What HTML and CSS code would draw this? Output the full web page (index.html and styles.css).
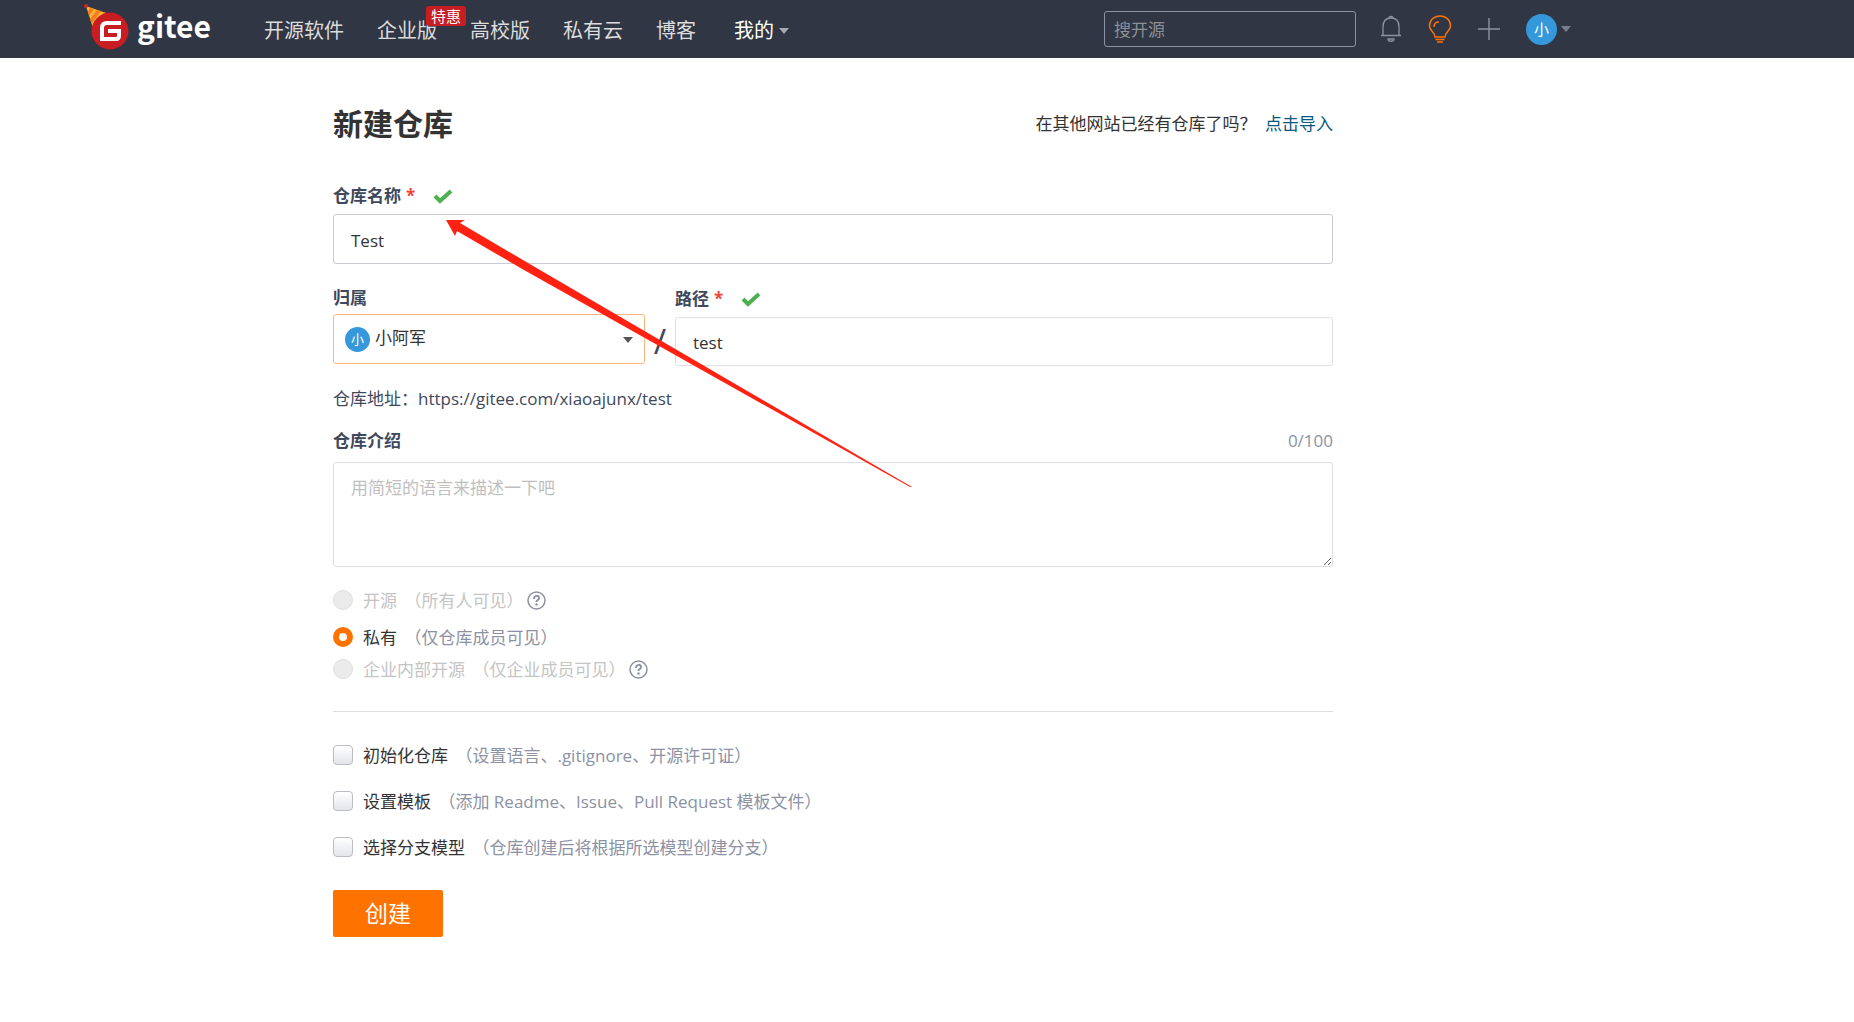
FILE: index.html
```html
<!DOCTYPE html>
<html lang="zh-CN">
    <head>
        <title>新建仓库 - Gitee</title>
        <meta charset="utf-8">
        <link rel="stylesheet" href="styles.css">
    </head>
    <body>
        <header class="header">
            <a class="logo" href="#">
                <svg class="logo-mark" width="46" height="46" viewBox="0 0 46 46">
                    <path d="M2 3 L25 11 L9 25 Z" fill="#fdb62f"/>
                    <path d="M6 5 L10 6 L5 13 L4 9 Z M13 7 L17 8 L8 20 L6 16 Z M20 9 L24 11 L12 23 L9 23 Z" fill="#f47b20"/>
                    <circle cx="2" cy="3" r="2" fill="#d8232a"/>
                    <circle cx="26" cy="28" r="18.5" fill="#c71d23"/>
                    <path d="M37 20 H23 Q18 20 18 25 V36 H32 Q35 36 35 33 V28 H24" fill="none" stroke="#fff" stroke-width="4"/>
                </svg>
                <span class="logo-text">gitee</span>
            </a>
            <nav class="nav">
                <a href="#">开源软件</a>
                <a href="#" class="nav-sale">企业版<span class="badge">特惠</span></a>
                <a href="#">高校版</a>
                <a href="#">私有云</a>
                <a href="#">博客</a>
                <a href="#" class="nav-mine">我的<span class="caret"></span></a>
            </nav>
            <div class="tools">
                <input class="search" type="text" placeholder="搜开源" aria-label="搜开源">
                <a class="tool" href="#" aria-label="通知">
                    <svg width="22" height="28" viewBox="0 0 22 28" fill="none" stroke="#8c92a4">
                        <path d="M3 20 V12 C3 6 6 3 11 3 C16 3 19 6 19 12 V20" stroke-width="1.3"/>
                        <path d="M1 20.5 H21" stroke-width="1.5"/>
                        <path d="M9 3 C9 1 13 1 13 3 M8 24 H14 C14 27 8 27 8 24 Z" stroke-width="1.3"/>
                    </svg>
                </a>
                <a class="tool" href="#" aria-label="提示">
                    <svg width="24" height="30" viewBox="0 0 24 30" fill="none" stroke="#fe7300" stroke-width="1.5">
                        <path d="M7 23 C7 18 1.5 17 1.5 12 C1.5 6 6 2 12 2 C18 2 22.5 6 22.5 12 C22.5 17 17 18 17 23 Z"/>
                        <path d="M6 13 C6 10 8 8 11 8 M7.5 25.5 H16.5 M9 28 H15"/>
                    </svg>
                </a>
                <a class="tool" href="#" aria-label="新建">
                    <svg width="22" height="22" viewBox="0 0 22 22" stroke="#8c92a4" stroke-width="1.4">
                        <path d="M11 0 V22 M0 11 H22"/>
                    </svg>
                </a>
                <a class="user" href="#"><span class="avatar avatar-big">小</span><span class="caret caret-dim"></span></a>
            </div>
        </header>

        <main class="container">
            <div class="title-row">
                <h1>新建仓库</h1>
                <p class="import">在其他网站已经有仓库了吗？ <a href="#">点击导入</a></p>
            </div>

            <form class="repo-form">
                <label class="label required" for="repo-name">仓库名称 <span class="star">*</span>
                    <svg class="check" width="20" height="16" viewBox="0 0 20 16"><path d="M2 8 L7 13 L18 3" fill="none" stroke="#4caf50" stroke-width="4"/></svg>
                </label>
                <input class="input input-name" id="repo-name" type="text" value="Test">

                <div class="path-row">
                    <div class="owner">
                        <label class="label" for="repo-owner">归属</label>
                        <div class="select-box">
                            <span class="avatar">小</span>
                            <select class="select" id="repo-owner">
                                <option>小阿军</option>
                            </select>
                            <span class="caret select-caret"></span>
                        </div>
                    </div>
                    <span class="slash">/</span>
                    <div class="path">
                        <label class="label required" for="repo-path">路径 <span class="star">*</span>
                            <svg class="check" width="20" height="16" viewBox="0 0 20 16"><path d="M2 8 L7 13 L18 3" fill="none" stroke="#4caf50" stroke-width="4"/></svg>
                        </label>
                        <input class="input input-path" id="repo-path" type="text" value="test">
                    </div>
                </div>

                <p class="address">仓库地址：https://gitee.com/xiaoajunx/test</p>

                <div class="intro-row">
                    <label class="label" for="repo-intro">仓库介绍</label>
                    <span class="count">0/100</span>
                </div>
                <textarea class="textarea" id="repo-intro" placeholder="用简短的语言来描述一下吧"></textarea>

                <div class="radios">
                    <div class="option option-open">
                        <input class="radio" type="radio" name="visible" id="v-open" disabled>
                        <label class="off" for="v-open">开源 <span>（所有人可见）</span></label>
                        <svg class="help" width="19" height="19" viewBox="0 0 19 19" fill="none" stroke="#8c92a4"><circle cx="9.5" cy="9.5" r="8.5" stroke-width="1.5"/><path d="M7 8 C7 4 12 4 12 7 C12 9 9.5 9 9.5 11" stroke-width="2"/><circle cx="9.5" cy="13.5" r="1.2" fill="#8c92a4" stroke="none"/></svg>
                    </div>
                    <div class="option">
                        <input class="radio" type="radio" name="visible" id="v-private" checked>
                        <label for="v-private">私有 <span>（仅仓库成员可见）</span></label>
                    </div>
                    <div class="option">
                        <input class="radio" type="radio" name="visible" id="v-inner" disabled>
                        <label class="off" for="v-inner">企业内部开源 <span>（仅企业成员可见）</span></label>
                        <svg class="help" width="19" height="19" viewBox="0 0 19 19" fill="none" stroke="#8c92a4"><circle cx="9.5" cy="9.5" r="8.5" stroke-width="1.5"/><path d="M7 8 C7 4 12 4 12 7 C12 9 9.5 9 9.5 11" stroke-width="2"/><circle cx="9.5" cy="13.5" r="1.2" fill="#8c92a4" stroke="none"/></svg>
                    </div>
                </div>

                <div class="checks">
                    <div class="option">
                        <input class="checkbox" type="checkbox" id="c-init">
                        <label for="c-init">初始化仓库 <span>（设置语言、.gitignore、开源许可证）</span></label>
                    </div>
                    <div class="option">
                        <input class="checkbox" type="checkbox" id="c-tpl">
                        <label for="c-tpl">设置模板 <span>（添加 Readme、Issue、Pull Request 模板文件）</span></label>
                    </div>
                    <div class="option">
                        <input class="checkbox" type="checkbox" id="c-branch">
                        <label for="c-branch">选择分支模型 <span>（仓库创建后将根据所选模型创建分支）</span></label>
                    </div>
                </div>

                <button class="btn" type="button">创建</button>
            </form>

            <!-- red arrow pointing at the name check -->
            <svg class="arrow" width="466" height="268" viewBox="0 0 466 268">
                <path d="M0 0 L19 0 L14 3 L94 50 L466 267 L464 267 L78 50 L11 11 L9 16 Z" fill="#ff2213"/>
            </svg>
        </main>
    </body>
</html>
```
FILE: styles.css
```css
* {
    box-sizing: border-box;
}
body {
    margin: 0;
    background-color: white;
    color: #333;
    font-family: "Open Sans", "Noto Sans CJK SC", sans-serif;
    font-size: 17px;
    line-height: 24px;
}
a {
    text-decoration: none;
}
h1, p {
    margin: 0;
}
input, select, textarea, button {
    font-family: inherit;
    font-size: 17px;
}

/* header */
.header {
    display: flex;
    align-items: center;
    height: 58px;
    padding: 0 283px 0 84px;
    background-color: #303643;
}
.logo {
    display: flex;
    align-items: center;
    width: 180px;
    gap: 7px;
}
.logo-mark {
    display: block;
    overflow: visible;
    margin-bottom: 6px;
}
.logo-text {
    color: white;
    font-family: "Noto Sans CJK SC", sans-serif;
    font-size: 30px;
    font-weight: bold;
    line-height: 40px;
    padding-bottom: 8px;
}
.nav {
    display: flex;
    gap: 33px;
    padding-top: 3px;
    font-size: 20px;
}
.nav a {
    color: #dcdcdc;
    white-space: nowrap;
}
.nav-sale {
    position: relative;
}
.badge {
    position: absolute;
    left: 49px;
    top: -13px;
    width: 40px;
    border-radius: 3px;
    background-color: #c71d23;
    color: white;
    font-size: 15px;
    line-height: 20px;
    text-align: center;
}
.nav .nav-mine {
    display: flex;
    align-items: center;
    gap: 5px;
    margin-left: 5px;
    color: white;
}
.caret {
    border: 5px solid transparent;
    border-top: 6px solid #a7aab2;
    border-bottom: 0;
}
.caret-dim {
    border-top-color: #777d8c;
}
.tools {
    display: flex;
    align-items: center;
    margin-left: auto;
}
.search {
    width: 252px;
    height: 36px;
    margin-right: 24px;
    padding: 0 9px;
    border: 1px solid #8c92a4;
    border-radius: 3px;
    background-color: transparent;
    color: white;
}
.search::placeholder {
    color: #8c8f96;
}
.tool {
    display: flex;
    margin-right: 26px;
}
.user {
    display: flex;
    align-items: center;
    gap: 4px;
}
.avatar {
    display: block;
    width: 25px;
    border-radius: 50%;
    background-color: #3498db;
    color: white;
    font-size: 13px;
    line-height: 25px;
    text-align: center;
}
.avatar-big {
    width: 31px;
    font-size: 15px;
    line-height: 31px;
}

/* page */
.container {
    position: relative;
    padding: 43px 521px 40px 333px;
}
.title-row {
    display: flex;
    justify-content: space-between;
    align-items: center;
    height: 46px;
    margin-bottom: 36px;
}
h1 {
    font-size: 30px;
    line-height: 44px;
}
.import a {
    margin-left: 4px;
    color: #005980;
}
.label {
    display: block;
    margin-bottom: 4px;
    color: #40485b;
    font-weight: bold;
}
.required {
    display: flex;
    align-items: center;
    gap: 5px;
    height: 26px;
    margin-bottom: 5px;
}
.star {
    color: #f44336;
}
.check {
    margin-left: 13px;
}
.input {
    display: block;
    width: 100%;
    height: 50px;
    padding: 2px 17px 0;
    border: 1px solid #dcdfe6;
    border-radius: 3px;
    background-color: white;
    color: #333;
}
.input-name {
    border-color: #c9cad8;
}
.input-path {
    height: 49px;
}
.path-row {
    display: flex;
    margin-top: 22px;
}
.owner {
    width: 312px;
}
.path {
    flex: 1;
}
.slash {
    align-self: flex-end;
    width: 30px;
    color: #40485b;
    font-size: 34px;
    line-height: 50px;
    text-align: center;
}
.select-box {
    position: relative;
}
.select-box .avatar {
    position: absolute;
    left: 12px;
    top: 13px;
}
.select {
    display: block;
    width: 100%;
    height: 50px;
    padding: 0 30px 4px 41px;
    border: 1px solid #ffb67a;
    border-radius: 3px;
    appearance: none;
    background-color: white;
    color: #333;
}
.select-caret {
    position: absolute;
    right: 12px;
    top: 23px;
    border-top-color: #555;
}
.address {
    margin-top: 21px;
    color: #40485b;
}
.intro-row {
    display: flex;
    justify-content: space-between;
    margin: 18px 0 5px;
}
.count {
    color: #8c92a4;
}
.textarea {
    display: block;
    width: 100%;
    height: 105px;
    padding: 13px 17px;
    border: 1px solid #dcdfe6;
    border-radius: 3px;
    line-height: 24px;
}
.textarea::placeholder {
    color: #bfbfbf;
}
.radios {
    padding: 21px 0 30px;
    border-bottom: 1px solid #dcdddd;
}
.option {
    display: flex;
    align-items: center;
    gap: 10px;
    height: 24px;
    margin-bottom: 8px;
}
.option-open {
    margin-bottom: 13px;
}
.radios .option:last-child {
    margin-bottom: 0;
}
.option label {
    padding-top: 2px;
}
.option span {
    margin-left: 3px;
    color: #8c92a4;
}
.option .off,
.option .off span {
    color: #c4c4c4;
}
.help {
    margin-left: -6px;
}
.radio, .checkbox {
    appearance: none;
    width: 20px;
    height: 20px;
    margin: 0;
    border: 1px solid #dedede;
    border-radius: 50%;
    background-color: #ebebeb;
}
.radio:checked {
    border: 6px solid #fe7300;
    background-color: white;
}
.checkbox {
    border-color: #bbbdc2;
    border-radius: 4px;
    background: linear-gradient(#fff, #e3e5ea);
}
.checks {
    padding-top: 31px;
}
.checks .option {
    margin-bottom: 22px;
}
.btn {
    display: block;
    width: 110px;
    height: 47px;
    margin-top: 31px;
    padding: 0 0 3px;
    border: none;
    border-radius: 2px;
    background-color: #fe7300;
    color: white;
    font-size: 23px;
    cursor: pointer;
}
.arrow {
    position: absolute;
    left: 446px;
    top: 162px;
    pointer-events: none;
}
```
